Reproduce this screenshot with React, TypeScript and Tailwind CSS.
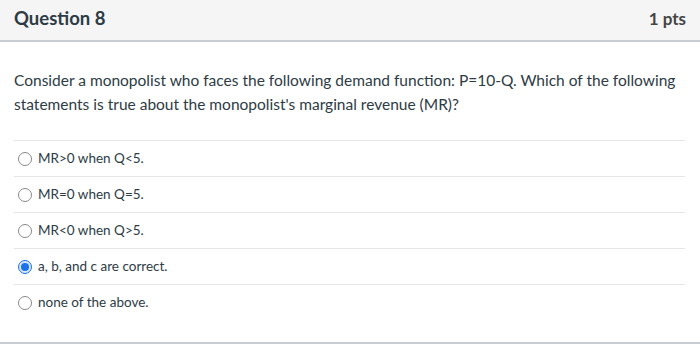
const answers = [
  { text: "MR>0 when Q<5.", checked: false },
  { text: "MR=0 when Q=5.", checked: false },
  { text: "MR<0 when Q>5.", checked: false },
  { text: "a, b, and c are correct.", checked: true },
  { text: "none of the above.", checked: false },
];

function Radio({ checked }: { checked: boolean }) {
  if (checked) {
    return (
      <span className="flex h-[14px] w-[14px] items-center justify-center rounded-full border border-[#1a73e8] bg-[#d7e6fb]">
        <span className="h-[8px] w-[8px] rounded-full bg-[#1a73e8]" />
      </span>
    );
  }
  return <span className="h-[14px] w-[14px] rounded-full border border-[#8a8a8a] bg-white" />;
}

export default function App() {
  return (
    <div className="h-[344px] w-[700px] bg-white text-[#2d3b45] font-['Lato',sans-serif]">
      <div className="flex h-[42px] items-center justify-between border-b-2 border-[#c7cdd1] bg-[#f5f5f5] px-[14px] pb-[2px]">
        <h2 className="text-[18.5px] font-bold">Question 8</h2>
        <span className="text-[17px] font-bold text-[#444]">1 pts</span>
      </div>
      <div className="border-b-2 border-[#c7cdd1] px-[14px] pt-[26px] pb-[22px]">
        <p className="text-[15.5px] leading-[24px]">
          Consider a monopolist who faces the following demand function: P=10-Q. Which of the following
          <br />
          statements is true about the monopolist's marginal revenue (MR)?
        </p>
        <div className="mt-[24px] mr-[1px]">
          {answers.map((a) => (
            <div key={a.text} className="flex h-[36px] items-center gap-[6px] border-t border-[#e3e5e7] pl-[4px]">
              <Radio checked={a.checked} />
              <span className="text-[13.5px]">{a.text}</span>
            </div>
          ))}
        </div>
      </div>
    </div>
  );
}
